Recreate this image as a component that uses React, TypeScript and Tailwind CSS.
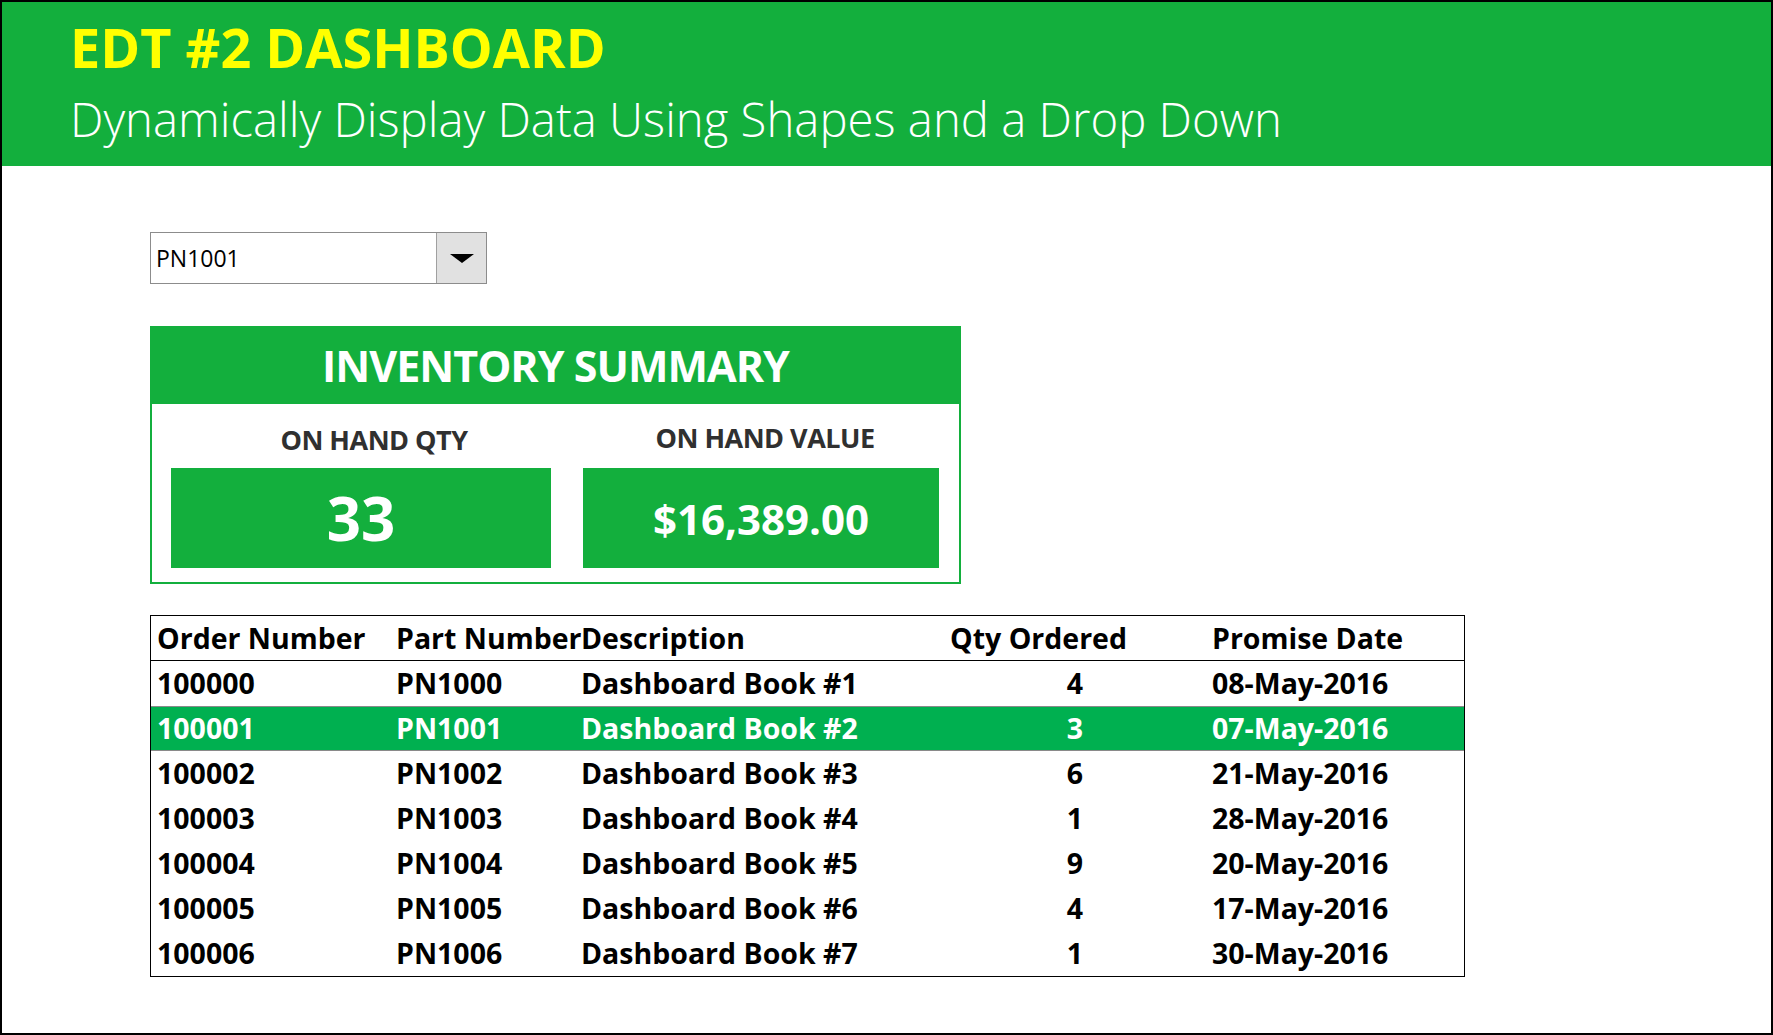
const rows = [
  { order: "100000", part: "PN1000", desc: "Dashboard Book #1", qty: 4, date: "08-May-2016" },
  { order: "100001", part: "PN1001", desc: "Dashboard Book #2", qty: 3, date: "07-May-2016" },
  { order: "100002", part: "PN1002", desc: "Dashboard Book #3", qty: 6, date: "21-May-2016" },
  { order: "100003", part: "PN1003", desc: "Dashboard Book #4", qty: 1, date: "28-May-2016" },
  { order: "100004", part: "PN1004", desc: "Dashboard Book #5", qty: 9, date: "20-May-2016" },
  { order: "100005", part: "PN1005", desc: "Dashboard Book #6", qty: 4, date: "17-May-2016" },
  { order: "100006", part: "PN1006", desc: "Dashboard Book #7", qty: 1, date: "30-May-2016" },
];

const selected = "PN1001";

export default function App() {
  return (
    <div
      className="h-[1035px] w-full border-2 border-black bg-white overflow-hidden"
      style={{ fontFamily: '"Open Sans", "Noto Sans", sans-serif' }}
    >
      {/* Header */}
      <div className="h-[164px] bg-[#13af3d] pl-[68px] pt-[12px]">
        <h1 className="text-[54px] font-bold leading-[66px] text-[#ffff00]">EDT #2 DASHBOARD</h1>
        <p className="mt-[8px] text-[47.3px] font-light leading-[62px] whitespace-nowrap text-white">
          Dynamically Display Data Using Shapes and a Drop Down
        </p>
      </div>

      <div className="pl-[148px] pt-[66px]">
        {/* Drop down */}
        <div className="flex h-[52px] w-[337px] border border-[#8c8c8c] bg-white">
          <div className="flex flex-1 items-center pl-[5px] text-[23px] text-black">{selected}</div>
          <div className="flex w-[50px] items-center justify-center border-l border-[#a0a0a0] bg-[#e1e1e1]">
            <svg width="24" height="9" viewBox="0 0 24 9">
              <polygon points="0,0 24,0 12,9" fill="#000" />
            </svg>
          </div>
        </div>

        {/* Inventory summary */}
        <div className="mt-[42px] w-[811px] border-2 border-[#13af3d] bg-white">
          <div className="flex h-[76px] items-center justify-center bg-[#13af3d]">
            <span className="text-[43px] font-bold tracking-[-1px] text-white">INVENTORY SUMMARY</span>
          </div>
          <div className="flex gap-[32px] px-[19px] pb-[14px]">
            <div className="flex w-[380px] flex-col">
              <div className="flex h-[64px] items-center justify-center pl-[26px] pt-[8px] text-[27px] font-bold tracking-[-0.5px] text-[#303030]">
                ON HAND QTY
              </div>
              <div className="flex h-[100px] items-center justify-center bg-[#13af3d] text-[60px] font-bold text-white">
                33
              </div>
            </div>
            <div className="flex w-[356px] flex-col">
              <div className="flex h-[64px] items-center justify-center pt-[4px] pl-[8px] text-[27px] font-bold tracking-[-0.5px] text-[#303030]">
                ON HAND VALUE
              </div>
              <div className="flex h-[100px] items-center justify-center bg-[#13af3d] text-[42px] font-bold text-white">
                $16,389.00
              </div>
            </div>
          </div>
        </div>

        {/* Orders table */}
        <div className="mt-[31px] w-[1315px] border border-black text-[28.5px] font-bold text-black">
          <div className="grid h-[45px] grid-cols-[239px_185px_369px_262px_1fr] items-center border-b border-black whitespace-nowrap">
            <div className="pl-[6px]">Order Number</div>
            <div className="pl-[6px]">Part Number</div>
            <div className="pl-[6px]">Description</div>
            <div className="pl-[6px]">Qty Ordered</div>
            <div className="pl-[6px]">Promise Date</div>
          </div>
          {rows.map((r) => {
            const active = r.part === selected;
            return (
              <div
                key={r.order}
                className={
                  active
                    ? "grid h-[45px] grid-cols-[239px_185px_369px_262px_1fr] items-center whitespace-nowrap border-y border-[#8a8a8a] bg-[#00b050] text-white"
                    : "grid h-[45px] grid-cols-[239px_185px_369px_262px_1fr] items-center whitespace-nowrap"
                }
              >
                <div className="pl-[6px]">{r.order}</div>
                <div className="pl-[6px]">{r.part}</div>
                <div className="pl-[6px]">{r.desc}</div>
                <div className="text-center">{r.qty}</div>
                <div className="pl-[6px]">{r.date}</div>
              </div>
            );
          })}
        </div>
      </div>
    </div>
  );
}
